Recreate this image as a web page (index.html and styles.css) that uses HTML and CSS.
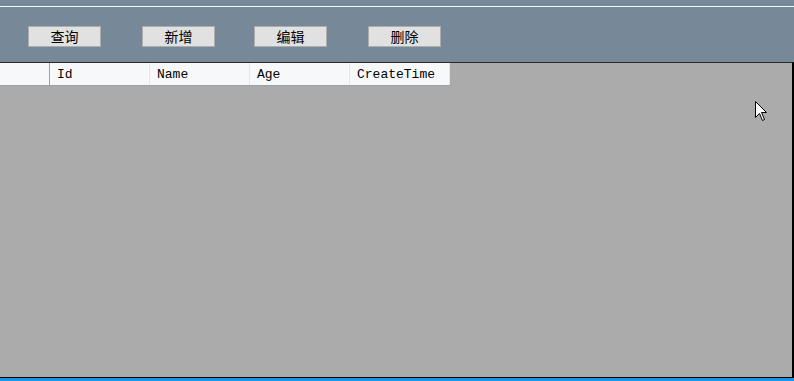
FILE: index.html
```html
<!DOCTYPE html>
<html lang="zh">
<head>
<meta charset="utf-8">
<link rel="stylesheet" href="styles.css">
</head>
<body>
<div class="window">
  <div class="toolbar">
    <div class="topline"></div>
    <div class="buttons">
      <button class="btn">查询</button>
      <button class="btn">新增</button>
      <button class="btn">编辑</button>
      <button class="btn">删除</button>
    </div>
  </div>
  <div class="grid">
    <div class="header">
      <div class="rowhead"></div>
      <div class="col">Id</div>
      <div class="col">Name</div>
      <div class="col">Age</div>
      <div class="col">CreateTime</div>
    </div>
    <svg class="cursor" width="14" height="21" viewBox="0 0 14 21">
      <path d="M0.5 0.5 L0.5 16.5 L4.5 12.5 L7.5 19.5 L9.5 18.5 L6.5 11.5 L11.5 11.5 Z" fill="#fff" stroke="#000" stroke-width="1"/>
    </svg>
  </div>
  <div class="bluebar"></div>
</div>
</body>
</html>
```
FILE: styles.css
```css
html, body {
  margin: 0;
  padding: 0;
  width: 794px;
  height: 381px;
  overflow: hidden;
  background: #778899;
}
.window {
  display: flex;
  flex-direction: column;
  height: 381px;
}
.toolbar {
  height: 62px;
  background: #778899;
  display: flex;
  flex-direction: column;
}
.topline {
  margin-top: 6px;
  height: 1px;
  background: #f4f6f8;
}
.buttons {
  display: flex;
  padding-left: 28px;
  margin-top: 19px;
}
.btn {
  width: 73px;
  height: 21px;
  margin: 0 39px 0 0;
  padding: 0;
  background: #e1e1e1;
  border: 1px solid #adadad;
  border-radius: 0;
  font-family: "Noto Sans CJK SC", sans-serif;
  font-size: 14px;
  line-height: 19px;
  color: #000;
}
.btn:nth-child(odd) {
  margin-right: 41px;
}
.grid {
  position: relative;
  flex: 1;
  background: #ababab;
  border-top: 1px solid #2a2a2a;
  border-right: 2px solid #000;
  border-bottom: 1px solid #000;
}
.header {
  display: flex;
  height: 22px;
  width: 450px;
  background: #f7f8fa;
  border-bottom: 1px solid #a0a0a0;
}
.rowhead {
  width: 49px;
  border-right: 1px solid #a0a0a0;
}
.col {
  border-right: 1px solid #e4e6ea;
  padding: 2px 0 0 7px;
  box-sizing: border-box;
  width: 100px;
  font-family: "Liberation Mono", monospace;
  font-size: 13px;
  line-height: 20px;
  color: #000;
}
.cursor {
  position: absolute;
  left: 755px;
  top: 38px;
}
.bluebar {
  height: 3px;
  background: #1c93e6;
}
```
